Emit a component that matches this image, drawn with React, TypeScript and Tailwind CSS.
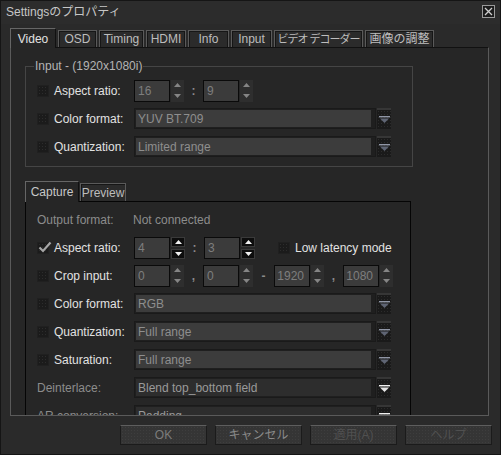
import React from "react";

const tex =
  "bg-[radial-gradient(#2c2c2c_0.7px,transparent_0.8px)] bg-[length:3px_3px]";
const btex =
  "bg-[radial-gradient(#3e3e3e_0.7px,transparent_0.8px)] bg-[length:3px_3px]";

function Check({ checked }: { checked?: boolean }) {
  return (
    <div className={`w-[12px] h-[12px] bg-[#1b1b1b] ${tex} border border-[#202020] flex items-center justify-center shrink-0 relative`}>
      {checked && (
        <svg width="14" height="12" viewBox="0 0 14 12" className="absolute -top-[2px] left-0">
          <path d="M1.5 6.5 L5 10 L12.5 1.5" fill="none" stroke="#a6a6a6" strokeWidth="2.2" />
        </svg>
      )}
    </div>
  );
}

function DropArrow({ enabled }: { enabled?: boolean }) {
  const a = enabled ? "#f0f0f0" : "#9096a6";
  const b = enabled ? "#e6e6e6" : "#5f6574";
  return (
    <svg width="11" height="8" viewBox="0 0 11 8">
      <rect x="0" y="0" width="11" height="1.4" fill={a} />
      <polygon points="1,2.4 10,2.4 5.5,7" fill={b} />
    </svg>
  );
}

function Combo({ value, enabled, dark }: { value: string; enabled?: boolean; dark?: boolean }) {
  return (
    <div className="flex h-[21px] w-[257px]">
      <div className="flex-1 border border-[#1a1a1a] bg-[#1f1f1f] pl-px pt-px pb-px pr-[4px]">
        <div
          className={`h-full ${dark ? "bg-[#2d2d2d] text-[#9a9a9a]" : "bg-[#3c3c3c] text-[#8e8e8e]"} flex items-center pl-[2px] whitespace-nowrap overflow-hidden`}
        >
          {value}
        </div>
      </div>
      <div className={`w-[14px] ml-[1px] bg-[#1a1a1a] ${tex} border-t-2 border-[#363636] flex items-center justify-center`}>
        <DropArrow enabled={enabled} />
      </div>
    </div>
  );
}

function SpinBtns({ enabled }: { enabled?: boolean }) {
  if (enabled) {
    return (
      <div className="w-[14px] flex flex-col gap-[2px] ml-px">
        <div className="flex-1 bg-[#0d0d0d] border border-[#3a3a3a] flex items-center justify-center">
          <svg width="7" height="4" viewBox="0 0 7 4"><polygon points="0,4 7,4 3.5,0" fill="#f0f0f0" /></svg>
        </div>
        <div className="flex-1 bg-[#0d0d0d] border border-[#3a3a3a] flex items-center justify-center">
          <svg width="7" height="4" viewBox="0 0 7 4"><polygon points="0,0 7,0 3.5,4" fill="#f0f0f0" /></svg>
        </div>
      </div>
    );
  }
  return (
    <div className="w-[13px] flex flex-col bg-[#2e2e2e] ml-px">
      <div className="flex-1 flex items-center justify-center">
        <svg width="7" height="4" viewBox="0 0 7 4"><polygon points="0,4 7,4 3.5,0" fill="#858585" /></svg>
      </div>
      <div className="flex-1 flex items-center justify-center">
        <svg width="7" height="4" viewBox="0 0 7 4"><polygon points="0,0 7,0 3.5,4" fill="#858585" /></svg>
      </div>
    </div>
  );
}

function Spin({ value, enabled, right }: { value: string; enabled?: boolean; right?: boolean }) {
  return (
    <div className="flex h-[22px]">
      <div
        className={`w-[36px] border border-[#0a0a0a] bg-[#3b3b3b] flex items-center ${right ? "justify-end pr-[5px]" : "pl-[3px]"} text-[#7e7e7e]`}
      >
        {value}
      </div>
      <SpinBtns enabled={enabled} />
    </div>
  );
}

function Sep({ c, w = 19 }: { c: string; w?: number }) {
  return (
    <div className={`${w === 21 ? "w-[21px]" : "w-[19px]"} text-center text-[#8a8a8a] font-bold`}>{c}</div>
  );
}

function Label({ text, check, checked, gray }: { text: string; check?: boolean; checked?: boolean; gray?: boolean }) {
  return (
    <div className="w-[97px] flex items-center shrink-0">
      {check && <Check checked={checked} />}
      <span className={`${check ? "ml-[5px]" : ""} ${gray ? "text-[#8c8c8c]" : "text-[#e2e2e2]"} whitespace-nowrap`}>
        {text}
      </span>
    </div>
  );
}

function Row({ children, h = "h-[21px]" }: { children: React.ReactNode; h?: string }) {
  return <div className={`flex items-center ${h}`}>{children}</div>;
}

const tabs = [
  { t: "Video", w: "w-[46px]", sel: true },
  { t: "OSD", w: "w-[39px]" },
  { t: "Timing", w: "w-[45px]" },
  { t: "HDMI", w: "w-[40px]" },
  { t: "Info", w: "w-[41px]" },
  { t: "Input", w: "w-[41px]" },
  { t: "ビデオ デコーダー", w: "w-[89px]", small: true },
  { t: "画像の調整", w: "w-[69px]" },
];

function BottomBtn({ t, color }: { t: string; color: string }) {
  return (
    <div
      className={`w-[87px] h-[20px] bg-[#353535] ${btex} border border-[#1b1b1b] border-t-[#5e5e5e] flex items-center justify-center ${color}`}
    >
      {t}
    </div>
  );
}

export default function App() {
  return (
    <div className="w-[501px] h-[455px] bg-[#2a2a2a] border border-[#151515] font-['Liberation_Sans','Noto_Sans_CJK_JP',sans-serif] text-[12px] leading-[14px] text-[#e2e2e2] flex flex-col overflow-hidden">
      {/* title bar */}
      <div className="h-[23px] flex items-center justify-between pl-[5px] pr-[5px] bg-[#2c2c2c]">
        <span className="text-[#c6c6c6] -mt-[1px]">Settingsのプロパティ</span>
        <div className="w-[13px] h-[13px] border border-[#9a9a9a] bg-[#1c1c1c] flex items-center justify-center -mt-[2px]">
          <svg width="9" height="9" viewBox="0 0 9 9">
            <path d="M1 1 L8 8 M8 1 L1 8" stroke="#d0d0d0" strokeWidth="1.3" />
          </svg>
        </div>
      </div>

      {/* tab strip */}
      <div className="flex items-end gap-[2px] ml-[9px] mt-[4px] h-[19px] relative z-10">
        {tabs.map((tb) =>
          tb.sel ? (
            <div
              key={tb.t}
              className={`${tb.w} h-[20px] -mb-px bg-[#262626] border-l border-t border-r border-l-[#666] border-t-[#666] border-r-[#111] flex items-center justify-center text-[#e2e2e2]`}
            >
              {tb.t}
            </div>
          ) : (
            <div
              key={tb.t}
              className={`${tb.w} h-[17px] bg-[#2b2b2b] border border-[#5a5a5a] border-b-0 shadow-[inset_1px_1px_0_#161616,inset_-1px_0_0_#161616] flex items-center justify-center text-[#bdbdbd] whitespace-nowrap ${tb.small ? "text-[11px] tracking-[-1px]" : ""}`}
            >
              {tb.t}
            </div>
          )
        )}
      </div>

      {/* main panel */}
      <div className="ml-[9px] w-[479px] h-[369px] bg-[#262626] border border-t-[#111] border-l-[#5a5a5a] border-r-[#5a5a5a] border-b-[#5a5a5a] overflow-hidden shrink-0">
        <fieldset className="ml-[14px] mt-[11px] w-[388px] border border-[#454545]">
          <legend className="ml-[8px] px-px text-[#b4b4b4]">Input - (1920x1080i)</legend>
          <div className="pl-[11px] pt-[7px] pb-[9px] flex flex-col gap-[7px]">
            <Row>
              <Label text="Aspect ratio:" check />
              <Spin value="16" />
              <Sep c=":" />
              <Spin value="9" />
            </Row>
            <Row>
              <Label text="Color format:" check />
              <Combo value="YUV BT.709" />
            </Row>
            <Row>
              <Label text="Quantization:" check />
              <Combo value="Limited range" />
            </Row>
          </div>
        </fieldset>

        {/* capture tabs */}
        <div className="ml-[14px] mt-[14px] flex items-end h-[20px] relative z-10">
          <div className="w-[54px] h-[21px] -mb-px bg-[#262626] border-l border-t border-r border-l-[#666] border-t-[#666] border-r-[#111] flex items-center justify-center text-[#c8c8c8]">
            Capture
          </div>
          <div className="w-[46px] h-[18px] ml-px bg-[#2b2b2b] border border-[#5a5a5a] border-b-0 shadow-[inset_1px_1px_0_#161616] flex items-center justify-center text-[#bdbdbd]">
            Preview
          </div>
        </div>
        <div className="ml-[14px] w-[386px] border border-[#050505] pl-[11px] pt-[8px] pb-[20px] flex flex-col gap-[7px]">
          <Row h="h-[20px]">
            <Label text="Output format:" gray />
            <span className="text-[#8c8c8c] -ml-px">Not connected</span>
          </Row>
          <Row>
            <Label text="Aspect ratio:" check checked />
            <Spin value="4" enabled />
            <Sep c=":" />
            <Spin value="3" enabled />
            <div className="ml-[23px] flex items-center">
              <Check />
              <span className="ml-[5px] text-[#e2e2e2]">Low latency mode</span>
            </div>
          </Row>
          <Row>
            <Label text="Crop input:" check />
            <Spin value="0" />
            <Sep c="," />
            <Spin value="0" />
            <Sep c="-" w={21} />
            <Spin value="1920" right />
            <Sep c="," />
            <Spin value="1080" right />
          </Row>
          <Row>
            <Label text="Color format:" check />
            <Combo value="RGB" />
          </Row>
          <Row>
            <Label text="Quantization:" check />
            <Combo value="Full range" />
          </Row>
          <Row>
            <Label text="Saturation:" check />
            <Combo value="Full range" />
          </Row>
          <Row>
            <Label text="Deinterlace:" gray />
            <Combo value="Blend top_bottom field" enabled dark />
          </Row>
          <Row>
            <Label text="AR conversion:" gray />
            <Combo value="Padding" enabled dark />
          </Row>
        </div>
      </div>

      {/* buttons */}
      <div className="flex justify-end gap-[8px] mt-[9px] pr-[8px]">
        <BottomBtn t="OK" color="text-[#7c7c7c]" />
        <BottomBtn t="キャンセル" color="text-[#8a8a8a]" />
        <BottomBtn t="適用(A)" color="text-[#505050]" />
        <BottomBtn t="ヘルプ" color="text-[#505050]" />
      </div>
    </div>
  );
}
